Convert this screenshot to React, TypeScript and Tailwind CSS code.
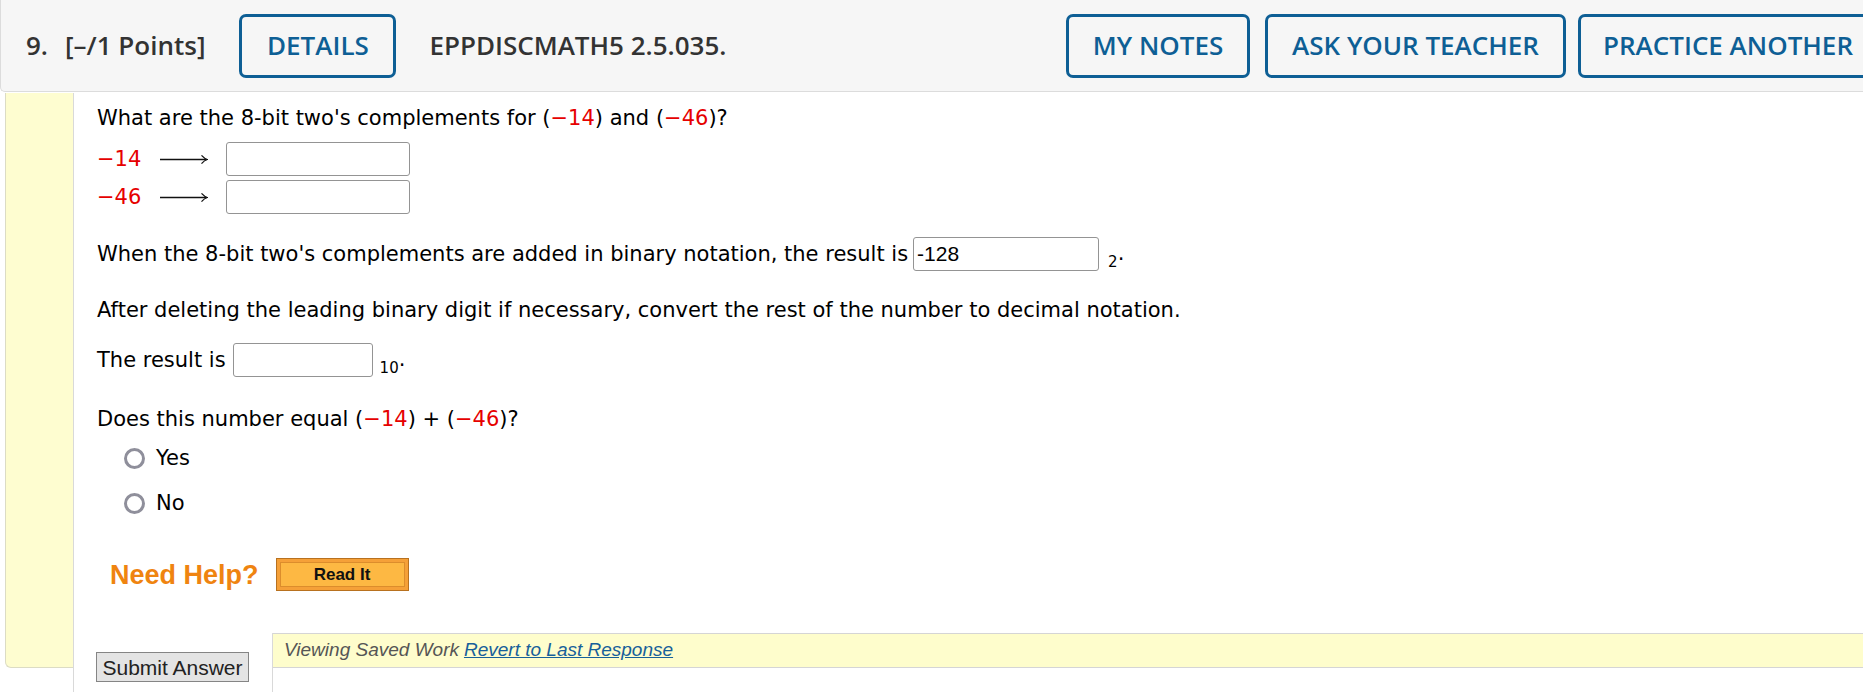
import React from 'react';

// long right arrow used in the answer table
function Arrow() {
  return (
    <svg width="48" height="12" viewBox="0 0 48 12" className="block">
      <path d="M0 6.5H46.5" stroke="#111" strokeWidth="1.3" />
      <path
        d="M41.5 2.4C43.2 4.2 45 5.8 47.2 6.5C45 7.2 43.2 8.8 41.5 10.6"
        stroke="#111"
        strokeWidth="1.3"
        fill="none"
      />
    </svg>
  );
}

function Radio({ label }: { label: string }) {
  return (
    <label className="flex h-[28px] items-center pl-[27px]">
      <span className="h-[21px] w-[21px] rounded-full border-[3px] border-[#8f8f9b] bg-white" />
      <span className="ml-[11px]">{label}</span>
    </label>
  );
}

function HeaderButton({ label, className }: { label: string; className: string }) {
  return (
    <button
      className={`h-[64px] rounded-[7px] border-[3px] border-[#0e5f95] text-[#0e5f95] ${className}`}
    >
      {label}
    </button>
  );
}

export default function App() {
  return (
    <div className="h-[692px] w-screen overflow-hidden bg-white">
      <div className="w-[1895px]">
        <header className="flex h-[92px] items-center rounded-bl-[5px] border-b border-l border-[#dcdcdc] bg-[#f6f6f6] pl-[25px] pr-[17px] font-['Open_Sans',sans-serif] text-[26px] font-semibold text-[#333]">
          <span>9.</span>
          <span className="ml-[17px]">[–/1 Points]</span>
          <HeaderButton label="DETAILS" className="ml-[34px] w-[157px]" />
          <span className="ml-[33px]">EPPDISCMATH5 2.5.035.</span>
          <div className="ml-auto flex">
            <HeaderButton label="MY NOTES" className="w-[184px]" />
            <HeaderButton label="ASK YOUR TEACHER" className="ml-[15px] w-[301px]" />
            <HeaderButton label="PRACTICE ANOTHER" className="ml-[12px] w-[300px]" />
          </div>
        </header>

        <div className="mt-px flex">
          <div className="ml-[5px] h-[575px] w-[68px] shrink-0 rounded-bl-[6px] border-b border-l border-[#dcdcc4] bg-[#fefdd0]" />

          <div className="flex h-[599px] flex-1 flex-col border-l border-[#d9d9d9]">
            <div className="pl-[23px] pt-[11px] font-['DejaVu_Sans',Verdana,sans-serif] text-[21px] leading-[28px] text-black">
              <p>
                What are the 8-bit two's complements for (<span className="text-[#e60000]">−14</span>) and (
                <span className="text-[#e60000]">−46</span>)?
              </p>

              <div className="mt-[10px] flex h-[34px] items-center">
                <span className="w-[63px] text-[#e60000]">−14</span>
                <Arrow />
                <input className="ml-[18px] h-[34px] w-[184px] rounded-[3px] border border-[#949494] bg-white" />
              </div>
              <div className="mt-[4px] flex h-[34px] items-center">
                <span className="w-[63px] text-[#e60000]">−46</span>
                <Arrow />
                <input className="ml-[18px] h-[34px] w-[184px] rounded-[3px] border border-[#949494] bg-white" />
              </div>

              <div className="mt-[23px] flex h-[34px] items-center">
                <span>When the 8-bit two's complements are added in binary notation, the result is</span>
                <input
                  defaultValue="-128"
                  className="ml-[5px] h-[34px] w-[186px] rounded-[3px] border border-[#949494] bg-white px-[3px] font-['Liberation_Sans',Arial,sans-serif] text-[21px] text-black"
                />
                <span className="ml-[9px]">
                  <span className="relative top-[7px] text-[15px]">2</span>.
                </span>
              </div>

              <p className="mt-[25px]">
                After deleting the leading binary digit if necessary, convert the rest of the number to decimal notation.
              </p>

              <div className="mt-[19px] flex h-[34px] items-center">
                <span>The result is</span>
                <input className="ml-[7px] h-[34px] w-[140px] rounded-[3px] border border-[#949494] bg-white" />
                <span className="ml-[7px]">
                  <span className="relative top-[7px] text-[15px]">10</span>.
                </span>
              </div>

              <p className="mt-[28px]">
                Does this number equal (<span className="text-[#e60000]">−14</span>) + (
                <span className="text-[#e60000]">−46</span>)?
              </p>

              <div className="mt-[11px]">
                <Radio label="Yes" />
              </div>
              <div className="mt-[17px]">
                <Radio label="No" />
              </div>

              <div className="mt-[41px] flex h-[33px] items-center pl-[13px] font-['Liberation_Sans',Arial,sans-serif]">
                <span className="text-[27px] font-bold text-[#ef8410]">Need Help?</span>
                <button className="ml-[17px] h-[33px] w-[133px] border border-[#b8711f] bg-[#f5a038] p-[3px]">
                  <span className="flex h-full w-full items-center justify-center border border-[#dc8d2c] bg-[#fdb843] text-[17px] font-bold leading-none text-[#111]">
                    Read It
                  </span>
                </button>
              </div>
            </div>

            <div className="mt-[42px] flex flex-1 font-['Liberation_Sans',Arial,sans-serif]">
              <div className="w-[198px] shrink-0 pl-[22px] pt-[19px]">
                <button className="h-[30px] w-[153px] border border-[#858585] bg-[#e4e4e4] text-[21px] leading-none text-[#222]">
                  Submit Answer
                </button>
              </div>
              <div className="flex-1 border-l border-[#d9d9d9]">
                <div className="flex h-[35px] items-center border-y border-[#d5d5d5] bg-[#fefdcc] pl-[11px] text-[19px] italic">
                  <span className="text-[#555]">Viewing Saved Work</span>
                  <a href="#" className="ml-[5px] text-[#17609a] underline">
                    Revert to Last Response
                  </a>
                </div>
              </div>
            </div>
          </div>
        </div>
      </div>
    </div>
  );
}
